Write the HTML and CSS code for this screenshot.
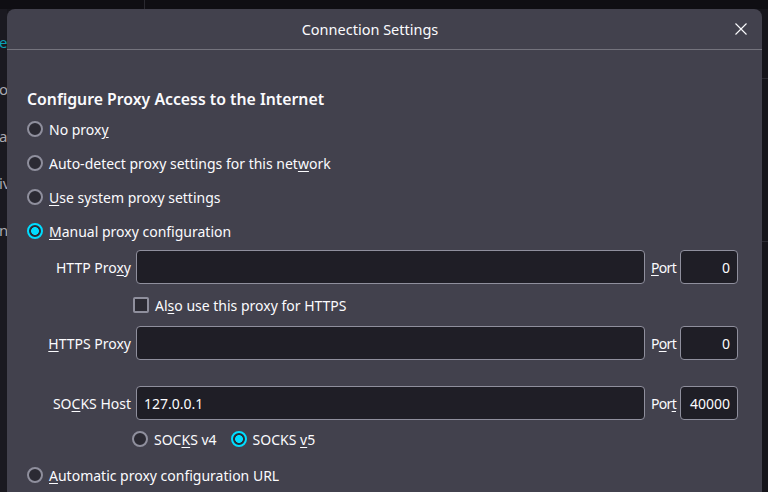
FILE: index.html
```html
<!DOCTYPE html>
<html lang="en">
<head>
<meta charset="utf-8">
<title>Connection Settings</title>
<link rel="stylesheet" href="styles.css">
</head>
<body>
<div class="page">
  <div class="topbar"><div class="topbar-left"></div><div class="topbar-right"></div></div>
  <div class="main">
    <nav class="sidebar">
      <div class="side-item active">er</div>
      <div class="side-item">or</div>
      <div class="side-item">a</div>
      <div class="side-item">iv</div>
      <div class="side-item">n</div>
    </nav>
    <div class="content">
      <div class="content-sec s1"></div>
      <div class="content-sec s2"></div>
    </div>
  </div>
</div>

<div class="dialog">
  <div class="dialog-header">
    <div class="dialog-title">Connection Settings</div>
    <div class="close" aria-label="Close">
      <svg width="12" height="12" viewBox="0 0 12 12"><path d="M0.5 0.5 L11.5 11.5 M11.5 0.5 L0.5 11.5" stroke="#fbfbfe" stroke-width="1.1" fill="none"/></svg>
    </div>
  </div>
  <div class="dialog-body">
    <h2 class="heading">Configure Proxy Access to the Internet</h2>
    <div class="radio-row"><span class="radio"></span><span>No prox<u>y</u></span></div>
    <div class="radio-row"><span class="radio"></span><span>Auto-detect proxy settings for this net<u>w</u>ork</span></div>
    <div class="radio-row"><span class="radio"></span><span><u>U</u>se system proxy settings</span></div>
    <div class="radio-row"><span class="radio on"></span><span><u>M</u>anual proxy configuration</span></div>

    <div class="field-row first">
      <span class="field-label">HTTP Pro<u>x</u>y</span>
      <div class="text-input"></div>
      <span class="port-label"><u>P</u>ort</span>
      <div class="text-input port-input">0</div>
    </div>
    <div class="check-row"><span class="checkbox"></span><span>Al<u>s</u>o use this proxy for HTTPS</span></div>
    <div class="field-row">
      <span class="field-label"><u>H</u>TTPS Proxy</span>
      <div class="text-input"></div>
      <span class="port-label">P<u>o</u>rt</span>
      <div class="text-input port-input">0</div>
    </div>
    <div class="field-row socks">
      <span class="field-label">SO<u>C</u>KS Host</span>
      <div class="text-input">127.0.0.1</div>
      <span class="port-label">Por<u>t</u></span>
      <div class="text-input port-input">40000</div>
    </div>
    <div class="version-row">
      <span class="radio"></span><span class="v4">SOC<u>K</u>S v4</span>
      <span class="radio on"></span><span>SOCKS <u>v</u>5</span>
    </div>
    <div class="radio-row"><span class="radio"></span><span><u>A</u>utomatic proxy configuration URL</span></div>
  </div>
</div>
</body>
</html>
```
FILE: styles.css
```css
html, body {
  margin: 0;
  padding: 0;
  width: 768px;
  height: 492px;
  overflow: hidden;
  background: #141319;
  font-family: "Noto Sans", "Open Sans", sans-serif;
}

.page {
  display: flex;
  flex-direction: column;
  height: 492px;
}

.topbar {
  height: 9px;
  display: flex;
  background: #0f0e13;
}
.topbar-left {
  width: 144px;
  border-right: 1px solid #2a2930;
}
.topbar-right { flex: 1; }

.main {
  flex: 1;
  display: flex;
}

.sidebar {
  width: 7px;
  overflow: hidden;
  background: #1a1920;
  padding-top: 23px;
  font-size: 15px;
  color: #a9a8b0;
}
.side-item {
  height: 47px;
  line-height: 20px;
  white-space: nowrap;
  margin-left: -1px;
}
.side-item.active { color: #0a9fb5; }

.content {
  flex: 1;
  background: #16151b;
  display: flex;
  flex-direction: column;
}
.content-sec.s1 {
  height: 69px;
  border-bottom: 1px solid #2c2b33;
}
.content-sec.s2 {
  height: 162px;
  border-bottom: 1px solid #2c2b33;
}

.dialog {
  position: absolute;
  left: 7px;
  top: 9px;
  width: 755px;
  height: 500px;
  background: #42414d;
  border-radius: 8px 8px 0 0;
  color: #fbfbfe;
  font-size: 14px;
}

.dialog-header {
  height: 40px;
  display: flex;
  align-items: center;
  border-bottom: 1px solid #74737d;
}
.dialog-title {
  flex: 1;
  text-align: center;
  font-size: 14.5px;
}
.close {
  width: 16px;
  height: 16px;
  margin-right: 13px;
  display: flex;
  align-items: center;
  justify-content: center;
}

.dialog-body {
  padding: 37px 24px 0 20px;
}

.heading {
  margin: 0 0 1px;
  font-size: 15.8px;
  font-weight: 600;
  line-height: 24px;
}

u { text-underline-offset: 2px; }

.radio-row {
  display: flex;
  align-items: center;
  height: 34px;
  gap: 6px;
}

.radio {
  width: 16px;
  height: 16px;
  box-sizing: border-box;
  border: 2px solid #8f8f9d;
  border-radius: 50%;
  background: #2b2a33;
  flex: none;
}
.radio.on {
  border-color: #00ddff;
  background: radial-gradient(circle, #00ddff 0 3.6px, #2b2a33 4.2px);
}

.field-row {
  display: flex;
  align-items: center;
  height: 34px;
}
.field-row.first { margin-top: 2px; }
.field-row.socks { margin-top: 26px; }

.field-label {
  width: 104px;
  text-align: right;
  margin-right: 5px;
  white-space: nowrap;
}

.text-input {
  flex: 1;
  height: 34px;
  box-sizing: border-box;
  border: 1px solid #8f8f9d;
  border-radius: 4px;
  background: #1f1e26;
  padding: 0 7px;
  display: flex;
  align-items: center;
}
.port-label {
  margin: 0 4px 0 6px;
  letter-spacing: -0.7px;
}
.port-input {
  flex: none;
  width: 58px;
  justify-content: flex-end;
}

.check-row {
  display: flex;
  align-items: center;
  height: 42px;
  padding-left: 106px;
  gap: 6px;
}
.checkbox {
  width: 16px;
  height: 16px;
  box-sizing: border-box;
  border: 2px solid #8f8f9d;
  border-radius: 2px;
  background: #2b2a33;
}

.version-row {
  display: flex;
  align-items: center;
  height: 38px;
  padding-left: 105px;
  gap: 6px;
}
.version-row .v4 { margin-right: 8px; }
```
